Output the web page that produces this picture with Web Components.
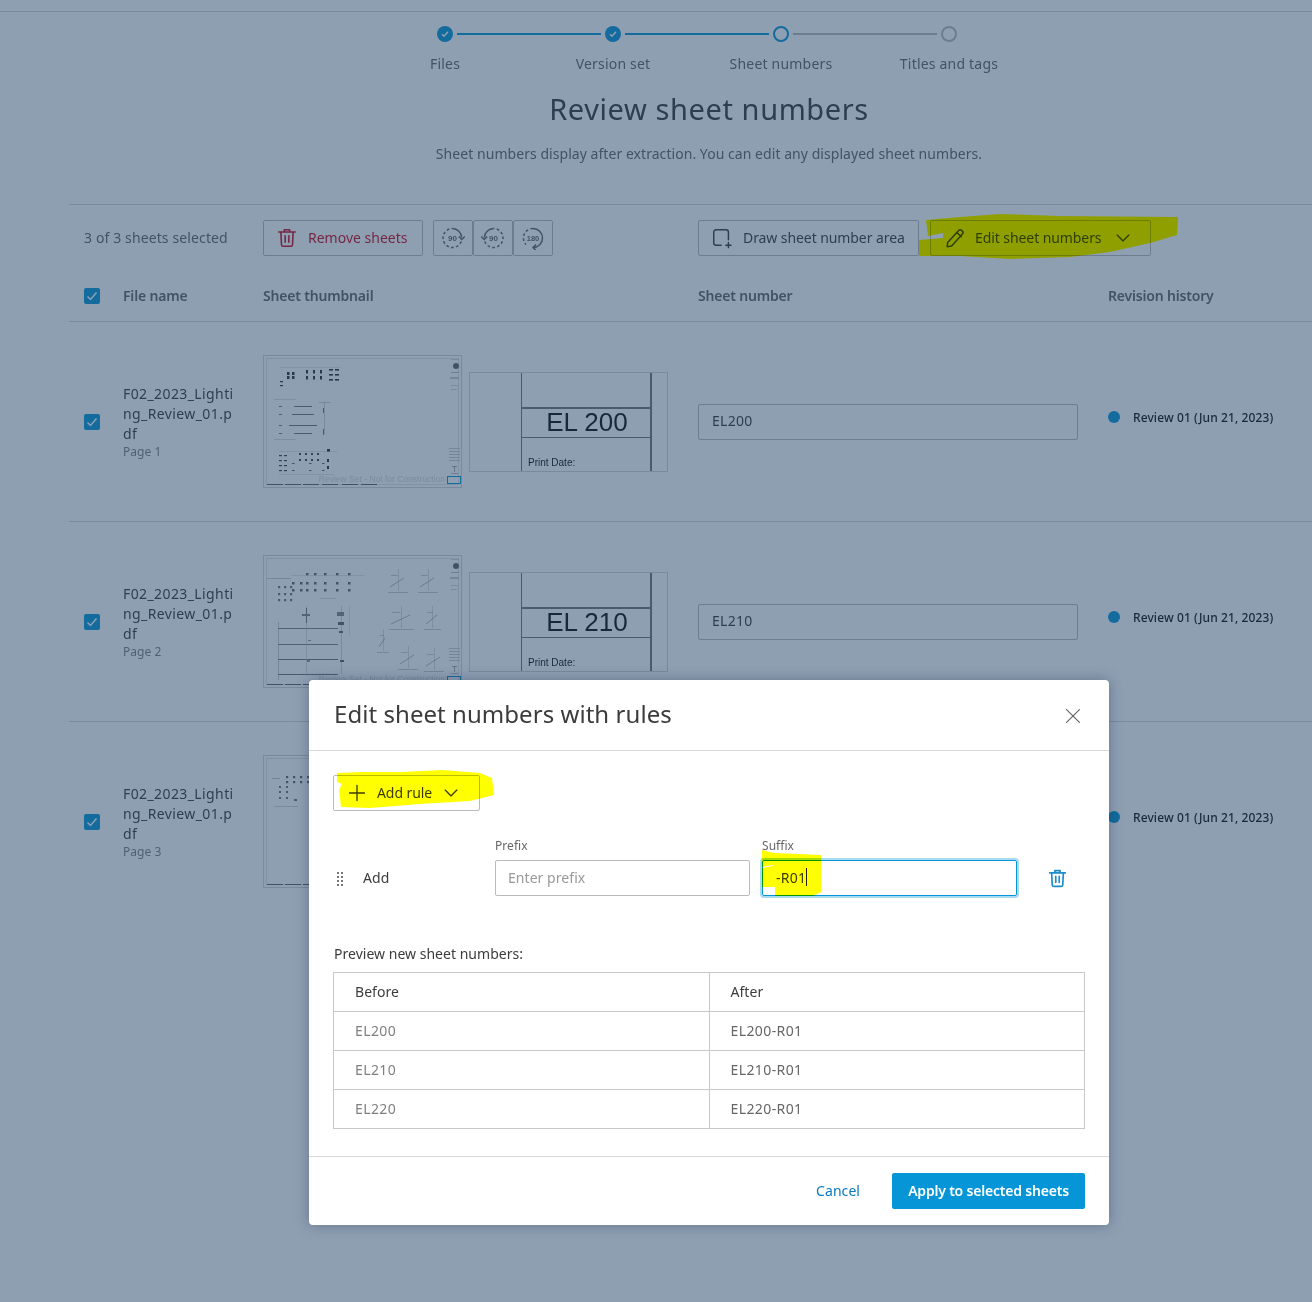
<!DOCTYPE html>
<html lang="en"><head><meta charset="utf-8"><title>Review sheet numbers</title>
<style>
html,body{margin:0;padding:0;background:#fff}
body{width:1312px;height:1302px;overflow:hidden;position:relative;font-family:"Noto Sans","Liberation Sans",sans-serif;font-size:14px;color:#3c3c3c;letter-spacing:.05px}
</style></head><body>
<page-view></page-view>
<dim-overlay></dim-overlay>
<rules-modal></rules-modal>
<marker-strokes></marker-strokes>
<script>
const ICONS={
 trash:'<path d="M3 5.500h18M9 5.500V3h6v2.500M5.300 5.500l.7 14a1.800 1.800 0 0 0 1.800 1.500h8.400a1.800 1.800 0 0 0 1.800-1.500l.7-14M10 9.500v7M14 9.500v7"/>',
 draw:'<path d="M11 20H5.500A2.500 2.500 0 0 1 3 17.500V5.500A2.500 2.500 0 0 1 5.500 3h11A2.500 2.500 0 0 1 19 5.500V14M19 17v5.500M16.200 19.800h5.600"/>',
 pencil:'<path d="M4 17 16 3.800a2.200 2.200 0 0 1 3.100-.1l.9.8a2.200 2.200 0 0 1 .1 3.100L8.300 20.800 3.500 21.500zM14 6l5 4.700"/>',
 chevron:'<path d="M5 8.500l7 7 7-7"/>',
 plus:'<path d="M12 3v18M3 12h18"/>',
 close:'<path d="M5 5l14 14M19 5L5 19"/>'
};
function def(name,css,html,init){
 customElements.define(name,class extends HTMLElement{
  constructor(){super();this.attachShadow({mode:'open'})}
  connectedCallback(){
   const a=n=>this.getAttribute(n)||'';
   this.shadowRoot.innerHTML='<style>'+css+'</style>'+(typeof html==='function'?html(a,this):html);
   if(init)init(this.shadowRoot,a);
  }
 });
}
def('ui-icon',':host{display:inline-flex;width:var(--s,18px);height:var(--s,18px);flex:none}svg{width:100%;height:100%;fill:none;stroke:currentColor;stroke-width:var(--sw,1.6);stroke-linecap:round;stroke-linejoin:round}',
 a=>`<svg viewBox="0 0 24 24">${ICONS[a('name')]}</svg>`);
def('rotate-icon',':host{display:inline-flex;width:24px;height:24px}svg{width:100%;height:100%;fill:none;stroke:currentColor;stroke-width:1.500}text{font:700 8px "Liberation Sans",sans-serif;fill:currentColor;stroke:none;text-anchor:middle;letter-spacing:0}',
 a=>{const k=a('kind');
  if(k==='cw')return `<svg viewBox="0 0 24 24"><path d="M11.500 2.500a9.500 9.500 0 0 1 9.200 9"/><path d="M20.300 15.500A9.500 9.500 0 1 1 11.500 2.500" stroke-dasharray="2.700 2.300"/><path d="M17.800 10.500l3 3 3-3"/><text x="11.500" y="14.900">90</text></svg>`;
  if(k==='ccw')return `<svg viewBox="0 0 24 24"><path d="M12.500 2.500a9.500 9.500 0 0 0-9.200 9"/><path d="M3.700 15.500A9.500 9.500 0 1 0 12.500 2.500" stroke-dasharray="2.700 2.300"/><path d="M.2 10.500l3 3 3-3"/><text x="12.500" y="14.900">90</text></svg>`;
  return `<svg viewBox="0 0 24 24"><path d="M12 2.500a9.500 9.500 0 0 1 0 19"/><path d="M12 2.500a9.500 9.500 0 0 0-7 16" stroke-dasharray="2.700 2.300"/><path d="M15 18.500l-3 3 3 3"/><text x="12" y="14.900" style="font-size:7.500px">180</text></svg>`;
 });
def('check-box',':host{display:inline-flex;width:16px;height:16px;background:#0696d7;border-radius:2px;align-items:center;justify-content:center}svg{width:12px;height:12px;fill:none;stroke:#fff;stroke-width:1.500}',
 '<svg viewBox="0 0 12 12"><path d="M1.500 6.500l3 3 6-7"/></svg>');
def('step-dot',`:host{display:flex;flex-direction:column;align-items:center;width:168px;position:relative;color:#666;line-height:20px;letter-spacing:.2px}
 .top{display:flex;align-items:center;width:100%;height:16px;margin-bottom:12px;position:relative;justify-content:center}
 .c{width:16px;height:16px;border-radius:50%;box-sizing:border-box;display:flex;align-items:center;justify-content:center}
 .done{background:#0696d7}.cur{border:2px solid #0696d7;background:#fff}.todo{border:2px solid #bbb;background:#fff}
 .l{position:absolute;left:calc(50% + 12px);width:144px;height:2px;top:7px}
 svg{width:8px;height:8px;fill:none;stroke:#fff;stroke-width:1.500}`,
 a=>`<div class="top"><div class="c ${a('state')}">${a('state')==='done'?'<svg viewBox="0 0 8 8"><path d="M1 4.200l2 2 4-4.500"/></svg>':''}</div>${a('line')?`<div class="l" style="background:${a('line')}"></div>`:''}</div><div><slot></slot></div>`);
def('wizard-stepper',':host{display:flex;justify-content:center;padding-top:14px;height:66px;box-sizing:border-box}',
 '<step-dot state="done" line="#0696d7">Files</step-dot><step-dot state="done" line="#0696d7">Version set</step-dot><step-dot state="cur" line="#bbb">Sheet numbers</step-dot><step-dot state="todo">Titles and tags</step-dot>');
def('tool-button',`:host{display:inline-flex;align-items:center;height:36px;box-sizing:border-box;border:1px solid #bbb;border-radius:2px;color:#3c3c3c;background:transparent;white-space:nowrap;letter-spacing:-.08px}`,
 '<slot></slot>');
def('sheet-thumb',`:host{display:block;width:199px;height:133px;box-sizing:border-box;border:1px solid #d4d4d4;background:#fff;position:relative}svg{display:block;width:197px;height:131px}text{font:8.500px "Liberation Sans",sans-serif;fill:#d6d6d6;letter-spacing:0}`,
 a=>{
  const p=+a('page');
  const R=(x,y,w,h,c)=>`<rect x="${x}" y="${y}" width="${w}" height="${h}" fill="${c||'#333'}"/>`;
  let s=`<rect x="2.500" y="2.500" width="192" height="126" fill="none" stroke="#e4e4e4"/>`;
  const grid=(xs,ys,w,h,c)=>{xs.forEach(x=>ys.forEach(y=>s+=R(x,y,w,h,c)))};
  if(p===1){
   grid([23,28],[16,20],2.500,3);grid([42,49,56],[14,20],2,3.500);grid([65,71],[13,18,23],4,1.600);
   s+=R(16,25,3,1.200)+R(16,29,3,1.200);
   s+=R(16,11,60,.5,'#ccc')+R(10,43,22,.5,'#bbb');
   [[30,50,18],[28,58,22],[25,69,28],[30,77,18]].forEach(r=>s+=R(r[0],r[1],r[2],.8,'#555'));
   [50,58,69,77].forEach(y=>s+=R(15,y,3,.8,'#555'));
   s+=R(55,46,12,.5,'#aaa')+R(60,46,.5,32,'#aaa')+R(59,52,1,5,'#777')+R(59,73,1,6,'#777');
   s+=R(10,83,22,.5,'#bbb');
   grid([15,20],[99,104,109,114],3,1.200,'#444');grid([35,41,47,53],[97,103],2,2,'#444');grid([28,45,58],[107,114],2.500,1,'#666');
   s+=R(63,93,3,3)+R(63,103,2,3)+R(63,110,2,3)+R(15,95,58,.5,'#ccc')+R(15,118,55,.5,'#ccc');
  }else if(p===2){
   grid([42,50,60,72,84],[17,26,33],2.500,2.500,'#666');grid([28,36],[26,33],2.500,2.500,'#666');
   grid([14,20,26],[30,37,43],2.200,2.200,'#777');
   s+=R(3,22,24,.5,'#999')+R(28,19,72,.5,'#ccc')+R(14,72,60,.8,'#666')+R(14,88,60,.8,'#666')+R(14,103,60,.8,'#555')+R(14,118,60,.8,'#555');
   s+=R(14,66,.5,58,'#999')+R(42,50,.5,70,'#bbb')+R(77,50,.5,68,'#aaa');
   s+=R(42,52,1,15,'#777')+R(38,58,8,2,'#888')+R(73,56,7,4,'#888')+R(74,66,6,3,'#666')+R(75,75,4,2,'#666')+R(76,104,4,2,'#666')+R(44,84,3,1,'#999')+R(43,104,3,2,'#999');
   s+=R(85,50,.5,30,'#ccc')+R(56,42,16,.5,'#bbb');
   [[124,13,20],[154,13,20],[125,50,25],[160,50,17],[113,73,12],[134,90,20],[160,92,20]].forEach(([x,y,w])=>{
    s+=R(x+w/2,y,.5,22,'#bbb')+R(x,y+23,w,.5,'#999')+`<path d="M${x+2} ${y+18}l${w-6}-9" stroke="#999" stroke-width=".7" fill="none"/>`+R(x+3,y+6,w/3,.6,'#aaa');
   });
  }else{
   grid([22,29,36,43],[20,25],2.200,2.200,'#666');grid([15,22],[30,35,41],2,2,'#777');
   s+=R(8,22,8,.5,'#888')+R(10,50,24,.5,'#aaa')+R(30,43,3,2,'#777');
  }
  s+=`<circle cx="192" cy="10" r="3" fill="#666"/>`+R(187,3,8,.6,'#bbb')+R(187,16,8,.6,'#999')+R(186,21,9,2,'#ccc')+R(187,29,8,.6,'#bbb')+R(187,33,6,.6,'#bbb');
  [92,95,98,101,104].forEach(y=>s+=R(185,y,11,.6,'#aaa'));
  s+=R(188,110,5,.7,'#888')+R(190,110,.7,6,'#888')+R(187,117,7,1,'#bbb');
  [3,21,39,58,78,97].forEach(x=>s+=R(x,128,16,.9,'#555'));
  if(p!==3)s+=`<text x="181" y="126" text-anchor="end">Review Set - Not for Construction</text>`;
  s+=`<rect x="183.500" y="120.500" width="13" height="7" fill="none" stroke="#0696d7" stroke-width="1"/>`;
  return `<svg viewBox="0 0 197 131">${s}</svg>`;
 });
def('title-crop',`:host{display:grid;grid-template-columns:52px 130px 1fr;grid-template-rows:34px 31px 1fr;width:199px;height:100px;box-sizing:border-box;border:1px solid #d4d4d4;background:#fff;font-family:"Liberation Sans",sans-serif;color:#111;letter-spacing:0}
 .a{border-right:1.500px solid #777}.m{border-right:2px solid #777}
 .t{border-top:2px solid #777;border-bottom:1px solid #777;font-size:26px;display:flex;align-items:center;justify-content:center;border-right:2px solid #777;padding-left:2px}
 .p{font-size:10px;display:flex;align-items:flex-end;padding:0 0 3px 6px;border-right:2px solid #777}`,
 a=>`<div class="a"></div><div class="m"></div><div></div><div class="a"></div><div class="t"><span style="margin-top:-1px">${a('label')}</span></div><div></div><div class="a"></div><div class="p">Print Date:</div><div></div>`);
def('sheet-row',`:host{display:grid;grid-template-columns:54px 140px 435px 410px 1fr;align-items:center;height:199px;border-bottom:1px solid #d4d4d4;margin-left:69px}
 :host([last]){border-bottom-color:transparent}
 .cb{padding-left:15px;display:flex}
 .fn{width:115px;line-height:20px;color:#3c3c3c;letter-spacing:.4px}
 .pg{font-size:12px;line-height:16px;color:#808080}
 .th{display:flex;align-items:center;gap:7px}
 .sn{width:380px;height:36px;box-sizing:border-box;border:1px solid #bbb;border-radius:2px;display:flex;align-items:center;padding:0 0 2px 13px;color:#3c3c3c;background:#fff;letter-spacing:.3px}
 .rv{display:flex;align-items:center;font-size:12px;font-weight:500;color:#111;margin-top:-9px;white-space:nowrap;letter-spacing:.1px}
 .d{width:12px;height:12px;border-radius:50%;background:#0696d7;margin-right:13px;flex:none}`,
 a=>`<div class="cb"><check-box></check-box></div><div><div class="fn">F02_2023_Lighti<wbr>ng_Review_01.p<wbr>df</div><div class="pg">Page ${a('page')}</div></div>
 <div class="th"><sheet-thumb page="${a('page')}"></sheet-thumb><title-crop label="EL ${a('num')}"></title-crop></div>
 <div><div class="sn">EL${a('num')}</div></div>
 <div class="rv"><span class="d"></span>Review 01 (Jun 21, 2023)</div>`);
def('sheet-table',`:host{display:block;border-top:1px solid #d4d4d4;margin-left:69px}
 .bar,.head{display:grid;grid-template-columns:194px 435px 410px 1fr;align-items:center}
 .bar{height:67px;box-sizing:border-box;padding-top:15px;align-items:start}
 .cnt{padding-left:15px;color:#666;letter-spacing:.12px;line-height:36px}
 .tools{display:flex;gap:10px}
 .rot{display:flex}
 .rot tool-button{width:40px;justify-content:center;color:#666}
 .rm{width:160px;padding-left:12px;color:#c90e20;gap:10px;letter-spacing:0}
 .rm ui-icon{--s:22px;--sw:1.700}
 tool-button span{margin-top:-2px}
 .span{grid-column:span 2;display:flex;gap:11px}
 .dr{width:221px;padding-left:12px;gap:10px}.dr ui-icon{--s:22px}
 .ed{width:221px;padding-left:13px;gap:9px}.ed ui-icon{--s:22px}
 .ed .chev{--s:20px;margin-left:2px}
 .head{height:50px;padding-bottom:2px;border-bottom:1px solid #d4d4d4;font-weight:600;color:#666;box-sizing:border-box;letter-spacing:-.18px}
 .head .h1{display:grid;align-items:center;padding-left:15px;grid-template-columns:39px 1fr}`,
 `<div class="bar"><div class="cnt">3 of 3 sheets selected</div>
  <div class="tools"><tool-button class="rm"><ui-icon name="trash"></ui-icon><span>Remove sheets</span></tool-button>
   <div class="rot"><tool-button><rotate-icon kind="cw"></rotate-icon></tool-button><tool-button><rotate-icon kind="ccw"></rotate-icon></tool-button><tool-button><rotate-icon kind="180"></rotate-icon></tool-button></div></div>
  <div class="span"><tool-button class="dr"><ui-icon name="draw"></ui-icon><span>Draw sheet number area</span></tool-button><tool-button class="ed"><ui-icon name="pencil"></ui-icon><span>Edit sheet numbers</span><ui-icon class="chev" name="chevron"></ui-icon></tool-button></div></div>
 <div class="head"><div class="h1"><check-box></check-box><span>File name</span></div><div>Sheet thumbnail</div><div>Sheet number</div><div>Revision history</div></div>`);
def('page-view',`:host{display:block}
 .top{height:11px;border-bottom:1px solid #d4d4d4}
 h1{font-size:29px;font-weight:400;line-height:36px;margin:13px 0 0;text-align:center;color:#3c3c3c;letter-spacing:.6px}
 p{margin:17px 0 0;text-align:center;color:#666;line-height:20px;height:60px}
 .wrap{margin-left:106px}`,
 `<div class="top"></div><wizard-stepper style="margin-left:82px"></wizard-stepper>
 <div class="wrap"><h1>Review sheet numbers</h1><p>Sheet numbers display after extraction. You can edit any displayed sheet numbers.</p></div>
 <sheet-table></sheet-table>
 <sheet-row page="1" num="200"></sheet-row><sheet-row page="2" num="210"></sheet-row><sheet-row page="3" num="220" last></sheet-row>`);
def('dim-overlay',':host{position:absolute;inset:0;background:rgba(31,63,101,.5)}','');
def('rules-modal',`:host{position:absolute;left:309px;top:680px;width:800px;background:#fff;border-radius:4px;box-shadow:0 0 14px rgba(20,40,70,.35);color:#3c3c3c}
 header{height:70px;border-bottom:1px solid #d9d9d9;display:flex;align-items:center;justify-content:space-between;padding:0 25px 0 25px}
 h2{margin:-3px 0 0;font-size:24px;font-weight:400;color:#3c3c3c;letter-spacing:.05px}
 .x{color:#666;--s:22px;--sw:1.300;margin-top:2px}
 main{padding:24px 24px 0}
 .add{width:147px;border-color:#bbb;padding-left:13px;gap:10px;--s:20px}
 .add span{margin-top:-2px}
 .add .chev{--s:20px;margin-left:-1px}
 .rule{display:grid;grid-template-columns:30px 132px 255px 255px 1fr;margin-top:27px;align-items:end}
 .grip{display:grid;grid-template-columns:2px 2px;gap:2px 2px;width:6px;margin:0 0 10px 4px;align-self:end}
 .grip i{width:2px;height:2px;background:#777}
 .lbl{height:36px;display:flex;align-items:center;padding-bottom:1px;box-sizing:border-box}
 .f{display:flex;flex-direction:column}
 .f label{font-size:12px;color:#666;line-height:16px;margin-bottom:6px}
 .in{height:36px;box-sizing:border-box;border:1px solid #bbb;border-radius:2px;display:flex;align-items:center;padding:0 0 2px 12px;color:#999;letter-spacing:.05px}
 .s{margin-left:12px;width:255px}
 .foc{border-color:#0696d7;box-shadow:0 0 0 2px rgba(6,150,215,.35);color:#3c3c3c;padding-left:13px;letter-spacing:.3px}
 .caret{display:inline-block;width:1px;height:18px;background:#222;margin-left:0}
 .tr{justify-self:end;height:36px;display:flex;align-items:center;color:#1c8ccb;padding-right:17px;--s:21px;--sw:1.900}
 .pv{margin:48px 0 8px 1px;line-height:20px;letter-spacing:.02px}
 table{width:100%;border-collapse:collapse;table-layout:fixed}
 td{border:1px solid #c8c8c8;height:39px;padding:0 0 2px 21px;color:#808080;box-sizing:border-box;letter-spacing:.4px}
 td+td{color:#666}
 tr:first-child td,tr:first-child td+td{color:#3c3c3c;letter-spacing:.05px}
 footer{margin-top:27px;border-top:1px solid #d9d9d9;height:69px;box-sizing:border-box;display:flex;align-items:center;justify-content:flex-end;padding:0 24px}
 .c{color:#0a79bf;margin:-2px 32px 0 0}
 .ap{background:#0696d7;color:#fff;font-weight:600;height:36px;box-sizing:border-box;padding-bottom:2px;width:193px;display:flex;align-items:center;justify-content:center;border-radius:2px;letter-spacing:-.2px}`,
 `<header><h2>Edit sheet numbers with rules</h2><ui-icon class="x" name="close"></ui-icon></header>
 <main><tool-button class="add"><ui-icon name="plus"></ui-icon><span>Add rule</span><ui-icon class="chev" name="chevron"></ui-icon></tool-button>
 <div class="rule"><div class="grip"><i></i><i></i><i></i><i></i><i></i><i></i><i></i><i></i></div><div class="lbl">Add</div>
 <div class="f"><label>Prefix</label><div class="in">Enter prefix</div></div>
 <div class="f s"><label>Suffix</label><div class="in foc">-R01<span class="caret"></span></div></div>
 <div class="tr"><ui-icon name="trash"></ui-icon></div></div>
 <div class="pv">Preview new sheet numbers:</div>
 <table><tr><td>Before</td><td>After</td></tr><tr><td>EL200</td><td>EL200-R01</td></tr><tr><td>EL210</td><td>EL210-R01</td></tr><tr><td>EL220</td><td>EL220-R01</td></tr></table></main>
 <footer><span class="c">Cancel</span><span class="ap">Apply to selected sheets</span></footer>`);
def('marker-strokes',':host{position:absolute;inset:0;mix-blend-mode:multiply;pointer-events:none}svg{display:block;width:1312px;height:1302px}',
 `<svg viewBox="0 0 1312 1302"><g fill="#ff0">
 <path d="M919 256L919 240 943 238 943 233 928 236 926 220 960 217 1000 214 1060 216 1178 217 1177 235 1150 243 1110 252 1070 257 1010 259 960 256Z"/>
 <path d="M337 773l25-1 40 0 40-2 38 3 12 5 2 17-24 6-50 3-50 4-29-1-2-17 3-6-5-2z"/>
 <path d="M762 850l12 3 47 2v37l-8 4h-38v-9h-13v-19l11-2v-1l-11 2z"/>
 </g></svg>`);
</script>
</body></html>
